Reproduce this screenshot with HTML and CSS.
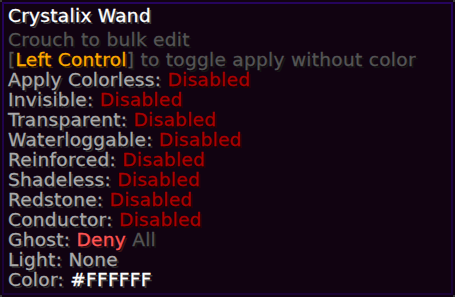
FILE: index.html
```html
<!DOCTYPE html>
<html>
<head>
<meta charset="utf-8">
<link rel="stylesheet" href="styles.css">
</head>
<body>
<div class="tooltip">
  <div class="line title"><span class="white">Crystalix Wand</span></div>
  <div class="line"><span class="dgray">Crouch to bulk edit</span></div>
  <div class="line"><span class="dgray">[</span><span class="gold">Left Control</span><span class="dgray">] to toggle apply without color</span></div>
  <div class="line"><span class="gray">Apply Colorless: </span><span class="dred">Disabled</span></div>
  <div class="line"><span class="gray">Invisible: </span><span class="dred">Disabled</span></div>
  <div class="line"><span class="gray">Transparent: </span><span class="dred">Disabled</span></div>
  <div class="line"><span class="gray">Waterloggable: </span><span class="dred">Disabled</span></div>
  <div class="line"><span class="gray">Reinforced: </span><span class="dred">Disabled</span></div>
  <div class="line"><span class="gray">Shadeless: </span><span class="dred">Disabled</span></div>
  <div class="line"><span class="gray">Redstone: </span><span class="dred">Disabled</span></div>
  <div class="line"><span class="gray">Conductor: </span><span class="dred">Disabled</span></div>
  <div class="line"><span class="gray">Ghost: </span><span class="red">Deny</span> <span class="dgray">All</span></div>
  <div class="line"><span class="gray">Light: None</span></div>
  <div class="line"><span class="gray">Color: </span><span class="white">#FFFFFF</span></div>
</div>
</body>
</html>
```
FILE: styles.css
```css
html, body {
  margin: 0;
  padding: 0;
}
body {
  width: 455px;
  height: 297px;
  background: #3a3a3a;
  overflow: hidden;
}
.tooltip {
  box-sizing: border-box;
  width: 451px;
  height: 293px;
  margin: 2px;
  padding: 2px 0 0 4px;
  border: 2px solid transparent;
  background:
    linear-gradient(#110311, #110311) padding-box,
    linear-gradient(#25045c, #1a0335) border-box;
  box-shadow: 0 -2px 0 0 #110311, 0 2px 0 0 #110311, -2px 0 0 0 #110311, 2px 0 0 0 #110311;
  font-family: "DejaVu Sans", sans-serif;
  font-size: 18.5px;
  letter-spacing: 0.3px;
  white-space: nowrap;
  -webkit-text-stroke: 0.3px currentColor;
}
.line {
  height: 20px;
  line-height: 20px;
}
.title {
  height: 24px;
}
.white { color: #ffffff; text-shadow: 2px 2px 0 #3f3f3f; }
.gray { color: #aaaaaa; text-shadow: 2px 2px 0 #2a2a2a; }
.dgray { color: #555555; text-shadow: 2px 2px 0 #151515; }
.gold { color: #ffaa00; text-shadow: 2px 2px 0 #3f2a00; }
.dred { color: #aa0000; text-shadow: 2px 2px 0 #2a0000; }
.red { color: #ff5555; text-shadow: 2px 2px 0 #3f1515; }
```
